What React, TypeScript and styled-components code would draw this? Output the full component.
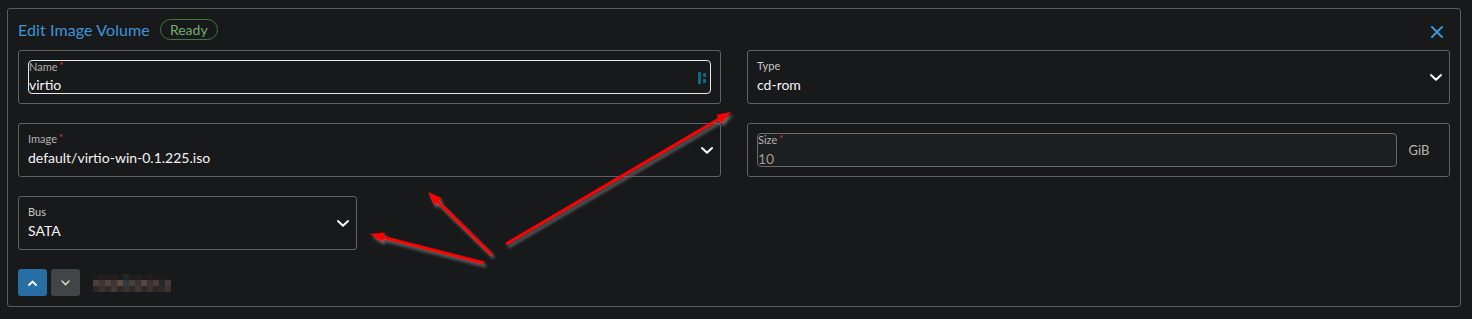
import React from "react";
import styled, { createGlobalStyle } from "styled-components";

const GlobalStyle = createGlobalStyle`
  html, body {
    margin: 0;
    padding: 0;
    background: #18191b;
  }
  body {
    font-family: Lato, "Open Sans", sans-serif;
    color: #f2f2f2;
  }
`;

const Page = styled.div`
  position: relative;
  width: 1472px;
  height: 319px;
  padding: 8px 11px 12px 7px;
  box-sizing: border-box;
  background: #18191b;
`;

const Panel = styled.section`
  height: 299px;
  box-sizing: border-box;
  border: 1px solid #5c5b57;
  border-radius: 3px;
  padding: 10px;
  display: flex;
  flex-direction: column;
`;

const Header = styled.div`
  display: flex;
  align-items: center;
  height: 21px;
  margin-bottom: 10px;
`;

const Title = styled.h2`
  margin: 0;
  font-size: 16px;
  font-weight: 400;
  color: #3d95d8;
  letter-spacing: 0.1px;
`;

const Badge = styled.span`
  margin-left: 10px;
  height: 21px;
  box-sizing: border-box;
  padding: 0 9px;
  border: 1px solid #3c7a41;
  border-radius: 11px;
  display: flex;
  align-items: center;
  font-size: 14px;
  color: #6fae6c;
`;

const Close = styled.button`
  margin-left: auto;
  margin-right: 6px;
  margin-top: 5px;
  width: 14px;
  height: 14px;
  padding: 0;
  background: none;
  border: none;
  display: flex;
  align-items: center;
  justify-content: center;
`;

const Grid = styled.div`
  display: grid;
  grid-template-columns: 703px 703px;
  column-gap: 26px;
  row-gap: 19px;
`;

const Box = styled.div<{ $width?: number }>`
  position: relative;
  height: 54px;
  width: ${(p) => (p.$width ? `${p.$width}px` : "auto")};
  box-sizing: border-box;
  border: 1px solid #64625c;
  border-radius: 3px;
  display: flex;
  align-items: center;
`;

const Plain = styled.div`
  flex: 1;
  padding: 0 0 0 9px;
  display: flex;
  flex-direction: column;
  margin-top: -1px;
`;

const Inner = styled.div<{ $focus?: boolean }>`
  flex: 1;
  margin: 0 9px;
  height: 34px;
  box-sizing: border-box;
  border: 1px solid ${(p) => (p.$focus ? "#e8e8e8" : "#6a6a66")};
  border-radius: 4px;
  background: ${(p) => (p.$focus ? "transparent" : "#1c1f21")};
  display: flex;
  flex-direction: column;
  justify-content: flex-start;
  position: relative;
`;

const Label = styled.span<{ $muted?: boolean }>`
  font-size: 11px;
  line-height: 12px;
  color: ${(p) => (p.$muted ? "#b4b0aa" : "#c9c9c9")};
  display: flex;
  align-items: flex-start;
`;

const Star = styled.span`
  color: #e03c3c;
  font-size: 9px;
  margin-left: 2px;
  line-height: 9px;
`;

const Value = styled.span<{ $dim?: boolean; $gap?: number }>`
  font-size: 14px;
  line-height: 18px;
  margin-top: ${(p) => (p.$gap !== undefined ? p.$gap : 4)}px;
  color: ${(p) => (p.$dim ? "#a49c8c" : "#f4f4f4")};
`;

const Chevron = styled.svg`
  margin: 2px 7px 0 auto;
  flex: none;
`;

const Unit = styled.span`
  width: 44px;
  flex: none;
  font-size: 13px;
  color: #b8b6b0;
  margin-right: 8px;
  text-align: center;
`;

const Keeper = styled.svg`
  position: absolute;
  right: 2px;
  top: 11px;
`;

const Footer = styled.div`
  display: flex;
  align-items: center;
  margin-top: 19px;
  gap: 4px;
`;

const OrderButton = styled.button<{ $primary?: boolean }>`
  width: 29px;
  height: 27px;
  padding: 0;
  border: none;
  border-radius: 3px;
  background: ${(p) => (p.$primary ? "#276ea5" : "#404548")};
  display: flex;
  align-items: center;
  justify-content: center;
`;

const Pixelated = styled.div`
  margin-left: 9px;
  display: grid;
  grid-template-columns: repeat(13, 6px);
  grid-auto-rows: 6px;
`;

const Pixel = styled.span<{ $c: string }>`
  background: ${(p) => p.$c};
`;

const Overlay = styled.svg`
  position: absolute;
  left: 0;
  top: 0;
  pointer-events: none;
`;

const ChevronIcon = ({ color = "#ffffff", size = 12 }: { color?: string; size?: number }) => (
  <Chevron width={size} height={size * 0.6} viewBox="0 0 12 7">
    <path d="M1 1 L6 5.6 L11 1" fill="none" stroke={color} strokeWidth="2" strokeLinecap="round" strokeLinejoin="round" />
  </Chevron>
);

const pixelRows = [
  ["#1d1c1c", "#211f1f", "#1e1e1e", "#221f1e", "#1c1c1d", "#25282b", "#1d1d1e", "#221f1f", "#1c1c1c", "#201e1e", "#1c1c1c", "#1e1c1c", "#1b1b1b"],
  ["#4a3f3c", "#3e3533", "#514440", "#3f3634", "#5c4a45", "#2c3a41", "#4b3f3b", "#3a3231", "#564742", "#3b3230", "#493d3a", "#2a2626", "#443a38"],
  ["#2c2827", "#3a3231", "#302b2a", "#453a37", "#2e2a29", "#3a3230", "#2f2a29", "#403633", "#2d2928", "#3b3230", "#2b2827", "#302a29", "#3d3432"],
];

type Arrow = { x1: number; y1: number; x2: number; y2: number };

const arrows: Arrow[] = [
  { x1: 506, y1: 244, x2: 731, y2: 112 },
  { x1: 492, y1: 255, x2: 428, y2: 192 },
  { x1: 484, y1: 263, x2: 370, y2: 234 },
];

const ArrowShape = ({ a }: { a: Arrow }) => {
  const dx = a.x2 - a.x1;
  const dy = a.y2 - a.y1;
  const len = Math.hypot(dx, dy);
  const ux = dx / len;
  const uy = dy / len;
  const head = 14;
  const half = 5;
  const bx = a.x2 - ux * head;
  const by = a.y2 - uy * head;
  const pts = `${a.x2},${a.y2} ${bx - uy * half},${by + ux * half} ${bx + uy * half},${by - ux * half}`;
  return (
    <g filter="url(#arrowShadow)">
      <line x1={a.x1} y1={a.y1} x2={bx + ux * 2} y2={by + uy * 2} stroke="#ff0000" strokeWidth="3" />
      <polygon points={pts} fill="#ff0000" />
    </g>
  );
};

const App = (): JSX.Element => {
  return (
    <Page>
      <GlobalStyle />
      <Panel>
        <Header>
          <Title>Edit Image Volume</Title>
          <Badge>Ready</Badge>
          <Close aria-label="close">
            <svg width="12" height="12" viewBox="0 0 12 12">
              <path d="M1 1 L11 11 M11 1 L1 11" stroke="#3d95d8" strokeWidth="2" strokeLinecap="round" />
            </svg>
          </Close>
        </Header>

        <Grid>
          <Box>
            <Inner $focus>
              <Label $muted>
                Name<Star>*</Star>
              </Label>
              <Value $gap={3}>virtio</Value>
              <Keeper width="10" height="12" viewBox="0 0 10 12">
                <rect x="0" y="0" width="3" height="12" fill="#0e6a7c" />
                <rect x="5" y="1" width="3" height="4" fill="#0e6a7c" />
                <rect x="5" y="7" width="3" height="4" fill="#0e6a7c" />
              </Keeper>
            </Inner>
          </Box>

          <Box>
            <Plain>
              <Label>Type</Label>
              <Value>cd-rom</Value>
            </Plain>
            <ChevronIcon />
          </Box>

          <Box>
            <Plain>
              <Label $muted>
                Image<Star>*</Star>
              </Label>
              <Value>default/virtio-win-0.1.225.iso</Value>
            </Plain>
            <ChevronIcon />
          </Box>

          <Box>
            <Inner style={{ marginRight: 0 }}>
              <Label $muted>
                Size<Star>*</Star>
              </Label>
              <Value $dim $gap={4}>10</Value>
            </Inner>
            <Unit>GiB</Unit>
          </Box>

          <Box $width={339}>
            <Plain>
              <Label>Bus</Label>
              <Value>SATA</Value>
            </Plain>
            <ChevronIcon />
          </Box>
        </Grid>

        <Footer>
          <OrderButton $primary aria-label="move up">
            <svg width="9" height="6" viewBox="0 0 9 6">
              <path d="M1 5 L4.5 1.5 L8 5" fill="none" stroke="#ffffff" strokeWidth="1.8" strokeLinecap="round" />
            </svg>
          </OrderButton>
          <OrderButton aria-label="move down">
            <svg width="9" height="6" viewBox="0 0 9 6">
              <path d="M1 1 L4.5 4.5 L8 1" fill="none" stroke="#d8cfc0" strokeWidth="1.6" strokeLinecap="round" />
            </svg>
          </OrderButton>
          <Pixelated>
            {pixelRows.flat().map((c, i) => (
              <Pixel key={i} $c={c} />
            ))}
          </Pixelated>
        </Footer>
      </Panel>

      <Overlay width="1472" height="319" viewBox="0 0 1472 319">
        <defs>
          <filter id="arrowShadow" x="-20%" y="-20%" width="140%" height="140%">
            <feDropShadow dx="2" dy="3" stdDeviation="1.5" floodColor="#6a6a6a" floodOpacity="0.9" />
          </filter>
        </defs>
        {arrows.map((a, i) => (
          <ArrowShape key={i} a={a} />
        ))}
      </Overlay>
    </Page>
  );
};

export default App;
